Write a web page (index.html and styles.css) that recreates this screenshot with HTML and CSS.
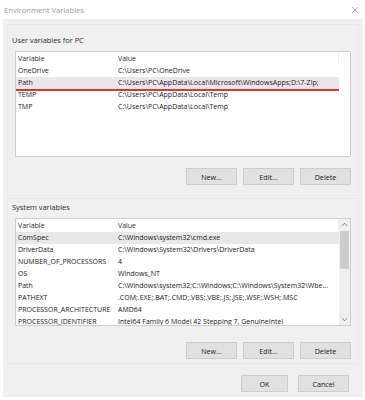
FILE: index.html
```html
<!DOCTYPE html>
<html lang="en">
<head>
    <meta charset="UTF-8">
    <title>Environment Variables</title>
    <link rel="stylesheet" href="styles.css">
</head>
<body>
    <div class="dialog">
        <div class="titlebar">
            <div class="title">Environment Variables</div>
            <div class="close">
                <svg viewBox="0 0 10 10"><path d="M1 1L9 9M9 1L1 9"/></svg>
            </div>
        </div>

        <div class="content">
            <div class="group group-user">
                <div class="group-label">User variables for PC</div>
                <div class="list list-user">
                    <div class="rows">
                        <div class="row head"><span>Variable</span><span>Value</span></div>
                        <div class="row"><span>OneDrive</span><span>C:\Users\PC\OneDrive</span></div>
                        <div class="row selected marked"><span>Path</span><span>C:\Users\PC\AppData\Local\Microsoft\WindowsApps;D:\7-Zip;</span></div>
                        <div class="row"><span>TEMP</span><span>C:\Users\PC\AppData\Local\Temp</span></div>
                        <div class="row"><span>TMP</span><span>C:\Users\PC\AppData\Local\Temp</span></div>
                    </div>
                    <div class="scroll empty"></div>
                </div>
                <div class="buttons">
                    <button>New...</button>
                    <button>Edit...</button>
                    <button>Delete</button>
                </div>
            </div>

            <div class="group group-system">
                <div class="group-label">System variables</div>
                <div class="list list-system">
                    <div class="rows">
                        <div class="row head"><span>Variable</span><span>Value</span></div>
                        <div class="row selected"><span>ComSpec</span><span>C:\Windows\system32\cmd.exe</span></div>
                        <div class="row"><span>DriverData</span><span>C:\Windows\System32\Drivers\DriverData</span></div>
                        <div class="row"><span>NUMBER_OF_PROCESSORS</span><span>4</span></div>
                        <div class="row"><span>OS</span><span>Windows_NT</span></div>
                        <div class="row"><span>Path</span><span>C:\Windows\system32;C:\Windows;C:\Windows\System32\Wbe...</span></div>
                        <div class="row"><span>PATHEXT</span><span>.COM;.EXE;.BAT;.CMD;.VBS;.VBE;.JS;.JSE;.WSF;.WSH;.MSC</span></div>
                        <div class="row"><span>PROCESSOR_ARCHITECTURE</span><span>AMD64</span></div>
                        <div class="row"><span>PROCESSOR_IDENTIFIER</span><span>Intel64 Family 6 Model 42 Stepping 7, GenuineIntel</span></div>
                    </div>
                    <div class="scroll">
                        <svg class="arrow" viewBox="0 0 8 6"><path d="M1 4.5L4 1.5L7 4.5"/></svg>
                        <div class="track"><div class="thumb"></div></div>
                        <svg class="arrow" viewBox="0 0 8 6"><path d="M1 1.5L4 4.5L7 1.5"/></svg>
                    </div>
                </div>
                <div class="buttons">
                    <button>New...</button>
                    <button>Edit...</button>
                    <button>Delete</button>
                </div>
            </div>

            <div class="footer">
                <button>OK</button>
                <button>Cancel</button>
            </div>
        </div>
    </div>
</body>
</html>
```

FILE: styles.css
```css
* {
    margin: 0;
    padding: 0;
    box-sizing: border-box;
}

body {
    background: #ffffff;
    font-family: 'Open Sans', 'Noto Sans', sans-serif;
    font-size: 7px;
    color: #1a1a1a;
}

.dialog {
    width: 365px;
    height: 400px;
    display: flex;
    flex-direction: column;
}

.titlebar {
    height: 19px;
    display: flex;
    align-items: center;
    justify-content: space-between;
    padding: 0 6px 0 4px;
}

.titlebar .title {
    font-size: 7.6px;
    color: #9a9a9a;
}

.titlebar .close svg {
    width: 8px;
    height: 8px;
    display: block;
    stroke: #a0a0a0;
    stroke-width: 1;
    fill: none;
}

.content {
    margin: 0 2px 0 3px;
    height: 378px;
    background: #f0f0f0;
    padding: 5px 4px 0 4px;
    display: flex;
    flex-direction: column;
}

.group {
    border: 1px solid #e9e9e9;
    padding: 0 7px;
}

.group-user {
    padding-top: 9px;
    padding-bottom: 10px;
}

.group-system {
    margin-top: 2px;
    padding-top: 2px;
    padding-bottom: 4px;
}

.group-label {
    height: 12px;
    line-height: 12px;
    font-size: 7.4px;
    color: #2b2b2b;
    margin: 0 0 5px -3px;
}

.list {
    background: #ffffff;
    border: 1px solid #cfcfcf;
    display: flex;
    overflow: hidden;
}

.list-user {
    height: 106px;
}

.list-system {
    height: 108px;
}

.rows {
    flex: 1;
    padding-top: 1px;
}

.row {
    display: grid;
    grid-template-columns: 100px 1fr;
    height: 12px;
    line-height: 12px;
    padding-left: 2px;
    white-space: nowrap;
    position: relative;
}

.row span {
    overflow: hidden;
}

.row.head {
    color: #2b2b2b;
    border-right: 1px solid #ececec;
}

.row.selected {
    background: #e8e8e8;
}

.row.marked::after {
    content: "";
    position: absolute;
    left: 0;
    right: 0;
    bottom: -2px;
    height: 2px;
    background: #e2323c;
}

.scroll {
    width: 11px;
    display: flex;
    flex-direction: column;
    align-items: center;
    background: #f0f0f0;
}

.scroll.empty {
    background: #ffffff;
}

.scroll .arrow {
    width: 7px;
    height: 11px;
    padding: 3px 0;
    stroke: #6a6a6a;
    stroke-width: 1;
    fill: none;
    display: block;
}

.scroll .track {
    flex: 1;
    width: 100%;
    padding: 1px 1px 0 1px;
}

.scroll .thumb {
    height: 38px;
    background: #cdcdcd;
}

.buttons {
    display: flex;
    justify-content: flex-end;
    gap: 6px;
}

.group-user .buttons {
    margin-top: 11px;
}

.group-system .buttons {
    margin-top: 16px;
}

button {
    width: 51px;
    height: 17px;
    background: #e1e1e1;
    border: 1px solid #cccccc;
    font-family: 'Open Sans', 'Noto Sans', sans-serif;
    font-size: 7.2px;
    color: #1a1a1a;
}

.footer {
    display: flex;
    justify-content: flex-end;
    gap: 10px;
    margin-top: 11px;
    padding-right: 10px;
}

.footer button {
    width: 47px;
}

.footer button + button {
    width: 51px;
}
```
